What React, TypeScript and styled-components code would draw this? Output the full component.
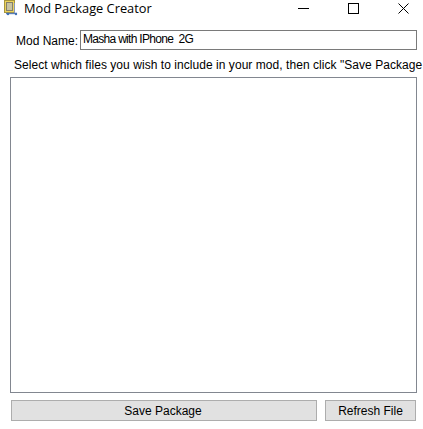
import { createGlobalStyle } from 'styled-components';
import styled from 'styled-components';

const GlobalStyle = createGlobalStyle`
  html, body {
    margin: 0;
    padding: 0;
    background: #ffffff;
  }
  body {
    font-family: "Liberation Sans", Arial, sans-serif;
    color: #000000;
  }
`;

function App() {
  return (
    <Window>
      <GlobalStyle />
      <TitleBar>
        <AppIcon viewBox="0 0 16 16">
          <rect x="1.5" y="0.5" width="10" height="12" fill="#ecd35c" stroke="#a8963c" />
          <rect x="3.5" y="2.5" width="6" height="8" fill="#c9c4a2" stroke="#85806a" />
          <path d="M11.5 3v10" stroke="#8a9ab8" />
          <path d="M3 13.5h11" stroke="#5b7fb8" strokeWidth="1.4" />
          <circle cx="5" cy="14" r="1.2" fill="#3f6fb5" />
          <circle cx="13" cy="14" r="1.2" fill="#3f6fb5" />
        </AppIcon>
        <Title>Mod Package Creator</Title>
        <WindowButtons>
          <WindowButton>
            <svg width="11" height="11" viewBox="0 0 11 11">
              <path d="M0 5.5h11" stroke="#000" fill="none" />
            </svg>
          </WindowButton>
          <WindowButton>
            <svg width="11" height="11" viewBox="0 0 11 11">
              <rect x="0.5" y="0.5" width="10" height="10" stroke="#000" fill="none" />
            </svg>
          </WindowButton>
          <WindowButton>
            <svg width="11" height="11" viewBox="0 0 11 11">
              <path d="M0.5 0.5l10 10M10.5 0.5l-10 10" stroke="#000" fill="none" />
            </svg>
          </WindowButton>
        </WindowButtons>
      </TitleBar>
      <NameRow>
        <NameLabel>Mod Name:</NameLabel>
        <NameInput defaultValue="Masha with IPhone  2G" />
      </NameRow>
      <Hint>Select which files you wish to include in your mod, then click "Save Package</Hint>
      <FileList />
      <Actions>
        <SaveButton>Save Package</SaveButton>
        <RefreshButton>Refresh File</RefreshButton>
      </Actions>
    </Window>
  );
}

export default App;

const Window = styled.div`
  width: 423px;
  height: 429px;
  overflow: hidden;
  display: flex;
  flex-direction: column;
  background: #ffffff;
`;

const TitleBar = styled.div`
  display: flex;
  align-items: center;
  height: 16px;
  padding-left: 3px;
`;

const AppIcon = styled.svg`
  width: 16px;
  height: 16px;
  flex: none;
`;

const Title = styled.div`
  margin-left: 5px;
  font-family: "Open Sans", "Noto Sans", sans-serif;
  font-size: 12.8px;
  white-space: nowrap;
`;

const WindowButtons = styled.div`
  margin-left: auto;
  display: flex;
  gap: 39px;
  padding-right: 14px;
`;

const WindowButton = styled.div`
  width: 11px;
  height: 14px;
  display: flex;
  align-items: center;
  justify-content: center;
`;

const NameRow = styled.div`
  display: flex;
  align-items: flex-end;
  margin-top: 14px;
  padding-left: 16px;
`;

const NameLabel = styled.label`
  width: 64px;
  flex: none;
  font-size: 12px;
  line-height: 18px;
  white-space: nowrap;
`;

const NameInput = styled.input`
  box-sizing: border-box;
  width: 337px;
  height: 20px;
  padding: 0 0 2px 2px;
  border: 1px solid #7a7a7a;
  border-radius: 0;
  outline: none;
  font-family: "Liberation Sans", sans-serif;
  font-size: 12px;
  letter-spacing: -0.7px;
  color: #000000;
`;

const Hint = styled.div`
  margin: 8px 0 0 14px;
  font-size: 12px;
  letter-spacing: 0.05px;
  white-space: nowrap;
`;

const FileList = styled.div`
  box-sizing: border-box;
  width: 407px;
  height: 316px;
  margin: 5px 0 0 10px;
  border: 1px solid #828790;
`;

const Actions = styled.div`
  display: flex;
  gap: 8px;
  margin: 7px 0 0 11px;
`;

const ActionButton = styled.button`
  box-sizing: border-box;
  height: 21px;
  padding: 0;
  background: #e1e1e1;
  border: 1px solid #adadad;
  border-radius: 0;
  font-family: "Liberation Sans", Arial, sans-serif;
  font-size: 12px;
  color: #000000;
`;

const SaveButton = styled(ActionButton)`
  width: 306px;
  padding-right: 2px;
`;

const RefreshButton = styled(ActionButton)`
  width: 91px;
`;
